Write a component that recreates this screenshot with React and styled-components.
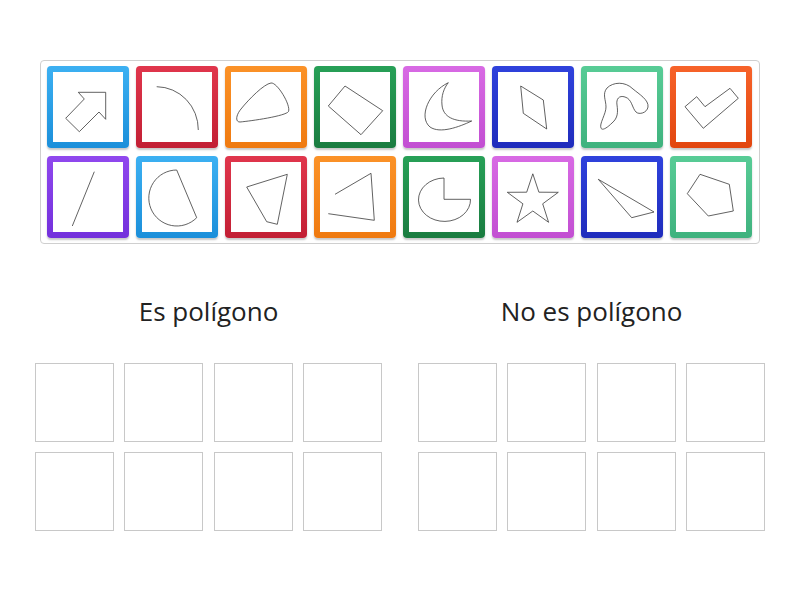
import React from 'react';
import styled, { createGlobalStyle } from 'styled-components';

const GlobalStyle = createGlobalStyle`
  html, body {
    margin: 0;
    padding: 0;
    background: #fff;
    font-family: "Open Sans", "Noto Sans", sans-serif;
  }
`;

const palette = {
  blue: ['#3cb0f2', '#1b8fda'],
  red: ['#e0364c', '#c21f34'],
  orange: ['#fb9228', '#ef7a10'],
  green: ['#27a057', '#1a7c40'],
  violet: ['#d86ae4', '#c24fd2'],
  navy: ['#2f42dc', '#1f2cbc'],
  teal: ['#58cc96', '#3fb27e'],
  flame: ['#f7632a', '#e2460f'],
  purple: ['#9048ee', '#7330dc'],
};

function starPoints(cx, cy, outer, inner) {
  const pts = [];
  for (let i = 0; i < 10; i++) {
    const r = i % 2 === 0 ? outer : inner;
    const a = (Math.PI / 5) * i - Math.PI / 2;
    pts.push(`${(cx + r * Math.cos(a)).toFixed(1)},${(cy + r * Math.sin(a)).toFixed(1)}`);
  }
  return pts.join(' ');
}

const shapes = [
  { color: 'blue', el: <polygon points="52.7,20.3 25.3,20.3 31.3,27 12.7,46.3 26.3,59.7 46,40 52.7,47.3" /> },
  { color: 'red', el: <path d="M14.7 14.7 A42 43 0 0 1 56.3 58" /> },
  { color: 'orange', el: <path d="M40 11 C46 10 60 33 57.5 39.5 C55 44 20 49 9 50 C4 50 5 43 10 37 C18 27 33 12 40 11 Z" /> },
  { color: 'green', el: <polygon points="25,14 62.7,38.7 41,62.7 8.3,34" /> },
  { color: 'violet', el: <path d="M39.3 10.7 C20 20 9 45 21 55 C31 62 50 55 62.7 49 C45 50 34 45 33 33 C32 24 35 16 39.3 10.7 Z" /> },
  { color: 'navy', el: <polygon points="22.7,14 45.3,28 48.7,57 25.3,41.3" /> },
  { color: 'teal', el: <path d="M20 16 C26 10 38 9 46 17 C52 22 62 28 61 35 C60 41 52 43 49 40 C45 36 45 27 38 25 C32 23 29 27 30 33 C31 40 31 46 25 51 C20 56 15 59 14 56 C12 52 19 42 19 35 C19 28 15 22 20 16 Z" /> },
  { color: 'flame', el: <polygon points="9,34.7 20.7,24.7 29,34.7 54,16.3 62.3,26.3 27.3,56.3" /> },
  { color: 'purple', el: <line x1="41.3" y1="9.7" x2="19.3" y2="64" /> },
  { color: 'blue', el: <path d="M34.7 8 L54.7 55.7 A28 28 0 1 1 34.7 8 Z" /> },
  { color: 'red', el: <polygon points="15.7,25 56.3,12.3 46.3,62.3 35.7,59.7" /> },
  { color: 'orange', el: <polyline points="8.3,51.7 54.3,58.3 51,11.3 15,32.3" /> },
  { color: 'green', el: <path d="M35 16 L35 37.3 L61.5 37.3 A26 21.7 0 1 1 35 16 Z" /> },
  { color: 'violet', el: <polygon points={starPoints(34.8, 38.6, 26.8, 10.4)} /> },
  { color: 'navy', el: <polygon points="11.3,17.3 67,50 44.7,55.7" /> },
  { color: 'teal', el: <polygon points="24,12.3 53.3,22.3 57.3,49 32.3,54 11.3,31.7" /> },
];

export default function App() {
  return (
    <Page>
      <GlobalStyle />
      <Tray>
        {shapes.map((s, i) => (
          <Tile key={i} $top={palette[s.color][0]} $bottom={palette[s.color][1]}>
            <TileFace>
              <ShapeSvg viewBox="0 0 70 70">{s.el}</ShapeSvg>
            </TileFace>
          </Tile>
        ))}
      </Tray>
      <Groups>
        {['Es polígono', 'No es polígono'].map((title) => (
          <Group key={title}>
            <GroupTitle>{title}</GroupTitle>
            <Slots>
              {Array.from({ length: 8 }).map((_, i) => (
                <Slot key={i} />
              ))}
            </Slots>
          </Group>
        ))}
      </Groups>
    </Page>
  );
}

const Page = styled.div`
  width: 800px;
  height: 600px;
  padding-top: 60px;
  box-sizing: border-box;
`;

const Tray = styled.div`
  margin-left: 40px;
  width: 720px;
  box-sizing: border-box;
  border: 1px solid #cfcfcf;
  border-radius: 4px;
  padding: 5px 6px;
  display: grid;
  grid-template-columns: repeat(8, 82px);
  column-gap: 7px;
  row-gap: 8px;
`;

const Tile = styled.div`
  width: 82px;
  height: 82px;
  box-sizing: border-box;
  padding: 6px;
  border-radius: 4px;
  background: linear-gradient(to bottom, ${(p) => p.$top}, ${(p) => p.$bottom});
  box-shadow: 0 2px 2px rgba(0, 0, 0, 0.22);
`;

const TileFace = styled.div`
  width: 70px;
  height: 70px;
  background: #fff;
  display: flex;
`;

const ShapeSvg = styled.svg`
  width: 70px;
  height: 70px;
  fill: none;
  stroke: #3a3a3a;
  stroke-width: 0.8;
  stroke-linejoin: round;
`;

const Groups = styled.div`
  display: flex;
  justify-content: space-between;
  padding: 0 35px;
  margin-top: 51px;
`;

const Group = styled.div`
  display: flex;
  flex-direction: column;
  align-items: center;
  width: 347px;
`;

const GroupTitle = styled.div`
  font-size: 26px;
  line-height: 32px;
  color: #222;
  margin-bottom: 36px;
`;

const Slots = styled.div`
  display: grid;
  grid-template-columns: repeat(4, 79px);
  column-gap: 10.3px;
  row-gap: 10px;
`;

const Slot = styled.div`
  width: 79px;
  height: 79px;
  box-sizing: border-box;
  border: 1px solid #c8c8c8;
`;
